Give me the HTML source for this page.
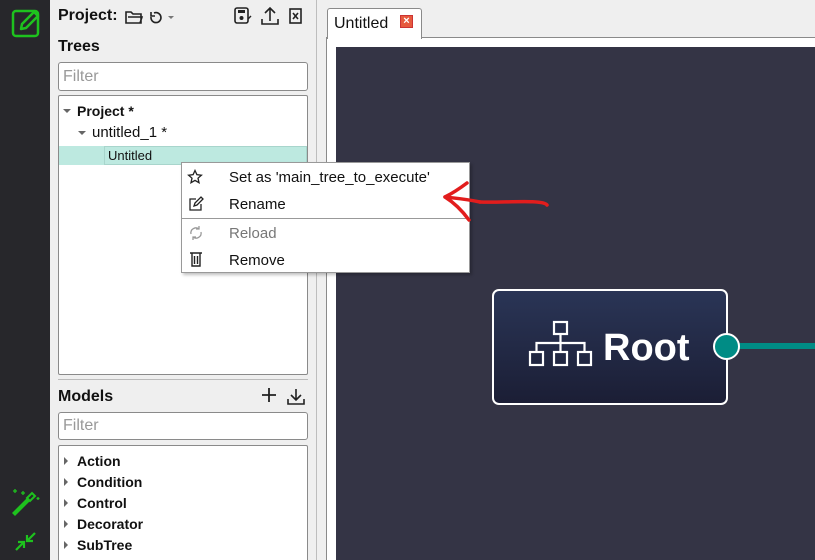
<!DOCTYPE html><html><head><style>
*{box-sizing:border-box;margin:0;padding:0}
html,body{width:815px;height:560px;overflow:hidden}
body{background:#efefef;font-family:"Liberation Sans","DejaVu Sans",sans-serif;position:relative;color:#111}
.a{position:absolute}
.inp{position:absolute;background:#fff;border:1px solid #8a8a8a;border-radius:3px;color:#999;font-size:16px;padding-left:4px;line-height:24px}
.box{position:absolute;background:#fff;border:1px solid #8a8a8a;border-radius:2px}
.b{font-weight:bold;font-size:14px}
.tri{position:absolute;width:0;height:0}
.td{border-left:4px solid transparent;border-right:4px solid transparent;border-top:4px solid #666}
.tr{border-top:4px solid transparent;border-bottom:4px solid transparent;border-left:4px solid #666}
.mi{position:absolute;left:47px;font-size:15px}
</style></head><body>
<div class="a" style="left:0;top:0;width:50px;height:560px;background:#27272b"></div>
<svg class="a" style="left:11px;top:7px" width="32" height="32" viewBox="0 0 32 32"><rect x="2" y="4" width="25" height="25" rx="3" fill="none" stroke="#1ec21e" stroke-width="2.5"/><path d="M10 22l1-5 12-12 4 4-12 12z" fill="#27272b" stroke="#1ec21e" stroke-width="2.5" stroke-linejoin="round"/></svg>
<svg class="a" style="left:9px;top:485px" width="32" height="32"><path d="M3 28l15-15 3 3-15 15z" fill="#1ec21e"/><path d="M18 13l5-5 3 3-5 5z" fill="none" stroke="#1ec21e" stroke-width="2"/><path d="M6 4v4M4 6h4M14 6v4M12 8h4M29 12v3M27.5 13.5h3" stroke="#1ec21e" stroke-width="1.3"/></svg>
<svg class="a" style="left:13px;top:530px" width="26" height="22"><path d="M3 20l8-8M5 12h6v6M22 3l-8 8M14 5v6h6" fill="none" stroke="#1ec21e" stroke-width="2.2"/></svg>
<div class="a b" style="left:58px;top:7px;font-size:16px">Project:</div>
<svg class="a" style="left:124px;top:8px" width="60" height="18"><path d="M2 4h5l2 2h8v9H2z M4 9h14l-2 6" fill="none" stroke="#222" stroke-width="1.6"/><path d="M30 5a5 5 0 1 1-3 4M27 4v4h4" fill="none" stroke="#222" stroke-width="1.6"/><path d="M44 8l3 3 3-3z" fill="#777"/></svg>
<svg class="a" style="left:233px;top:6px" width="75" height="20"><rect x="2" y="2" width="13" height="15" rx="2" fill="none" stroke="#222" stroke-width="1.6"/><rect x="5" y="4" width="7" height="3" fill="#222"/><circle cx="8.5" cy="12" r="2" fill="#222"/><path d="M15 13l3-3" stroke="#222" stroke-width="1.4"/><path d="M37 15v-13M32 7l5-5 5 5M29 13v5h16v-5" fill="none" stroke="#222" stroke-width="1.6"/><rect x="57" y="3" width="11" height="14" fill="none" stroke="#222" stroke-width="1.6"/><path d="M60 7l5 6M65 7l-5 6" stroke="#222" stroke-width="1.6"/></svg>
<div class="a b" style="left:58px;top:38px;font-size:16px">Trees</div>
<div class="inp" style="left:58px;top:62px;width:250px;height:29px;line-height:27px">Filter</div>
<div class="box" style="left:58px;top:95px;width:250px;height:280px"></div>
<div class="tri td" style="left:63px;top:109px"></div>
<div class="a b" style="left:77px;top:103px">Project *</div>
<div class="tri td" style="left:78px;top:131px"></div>
<div class="a" style="left:92px;top:124px;font-size:15px">untitled_1 *</div>
<div class="a" style="left:59px;top:146px;width:248px;height:19px;background:#bde9e0"></div>
<div class="a" style="left:104px;top:146px;width:203px;height:19px;border:1px solid #a8d5cc;font-size:13px;padding-left:3px;line-height:17px">Untitled</div>
<div class="a" style="left:58px;top:379px;width:250px;height:1px;background:#bbb"></div>
<div class="a b" style="left:58px;top:388px;font-size:16px">Models</div>
<svg class="a" style="left:260px;top:386px" width="50" height="22"><path d="M9 2v14M2 9h14" stroke="#222" stroke-width="1.8"/><path d="M36 3v11M31 9l5 5 5-5M28 13v5h16v-5" fill="none" stroke="#222" stroke-width="1.6"/></svg>
<div class="inp" style="left:58px;top:412px;width:250px;height:28px;line-height:26px">Filter</div>
<div class="box" style="left:58px;top:445px;width:250px;height:120px"></div>
<div class="tri tr" style="left:64px;top:457px"></div><div class="a b" style="left:77px;top:453px">Action</div>
<div class="tri tr" style="left:64px;top:478px"></div><div class="a b" style="left:77px;top:474px">Condition</div>
<div class="tri tr" style="left:64px;top:499px"></div><div class="a b" style="left:77px;top:495px">Control</div>
<div class="tri tr" style="left:64px;top:520px"></div><div class="a b" style="left:77px;top:516px">Decorator</div>
<div class="tri tr" style="left:64px;top:541px"></div><div class="a b" style="left:77px;top:537px">SubTree</div>
<div class="a" style="left:316px;top:0;width:1px;height:560px;background:#bdbdbd"></div>
<div class="a" style="left:326px;top:37px;width:489px;height:523px;background:#fff;border-left:1px solid #8a8a8a;border-top:1px solid #8a8a8a"></div>
<div class="a" style="left:327px;top:8px;width:95px;height:31px;background:#fff;border:1px solid #8a8a8a;border-bottom:none;border-radius:3px 3px 0 0"></div>
<div class="a" style="left:334px;top:15px;font-size:16px">Untitled</div>
<div class="a" style="left:400px;top:15px;width:13px;height:13px;background:#e65a3e;border:1px solid #c33;color:#fff;font-size:11px;line-height:11px;text-align:center;font-weight:bold">×</div>
<div class="a" style="left:336px;top:47px;width:479px;height:513px;background:#343445"></div>
<div class="a" style="left:727px;top:343px;width:88px;height:6px;background:#008c85"></div>
<div class="a" style="left:492px;top:289px;width:236px;height:116px;border:2px solid #fff;border-radius:7px;background:linear-gradient(#2a3556,#1b1e35)"></div>
<svg class="a" style="left:528px;top:320px" width="66" height="48"><g fill="none" stroke="#fff" stroke-width="2.2"><rect x="26" y="2" width="13" height="12"/><rect x="2" y="32" width="13" height="13"/><rect x="26" y="32" width="13" height="13"/><rect x="50" y="32" width="13" height="13"/><path d="M32.5 14v18M8.5 32v-9h48v9"/></g></svg>
<div class="a" style="left:603px;top:325px;color:#fff;font-weight:bold;font-size:38px;line-height:46px">Root</div>
<div class="a" style="left:713px;top:333px;width:27px;height:27px;border-radius:50%;background:#008c85;border:2px solid #fff"></div>
<div class="a" style="left:181px;top:162px;width:289px;height:111px;background:#fff;border:1px solid #999;box-shadow:2px 2px 3px rgba(0,0,0,.25)">
<svg class="a" style="left:5px;top:6px" width="16" height="16"><path d="M8 1.5l1.9 4.2 4.5.5-3.4 3 1 4.5L8 11.4 4 13.7l1-4.5-3.4-3 4.5-.5z" fill="none" stroke="#222" stroke-width="1.3"/></svg>
<div class="mi" style="top:6px">Set as 'main_tree_to_execute'</div>
<svg class="a" style="left:6px;top:33px" width="16" height="16"><path d="M8 3H2v11h11V8M6 10l1-3 6-6 2 2-6 6z" fill="none" stroke="#222" stroke-width="1.3"/></svg>
<div class="mi" style="top:33px">Rename</div>
<div class="a" style="left:0;top:55px;width:287px;height:1px;background:#999"></div>
<svg class="a" style="left:6px;top:62px" width="16" height="16"><path d="M3 9a5 5 0 0 1 8-5M13 7a5 5 0 0 1-8 5M11 1v3h-3M5 15v-3h3" fill="none" stroke="#999" stroke-width="1.3"/></svg>
<div class="mi" style="top:62px;color:#777">Reload</div>
<svg class="a" style="left:6px;top:88px" width="16" height="16"><path d="M2 2h12M4 2v13h8V2M6.5 5v8M9.5 5v8" fill="none" stroke="#222" stroke-width="1.4"/></svg>
<div class="mi" style="top:89px">Remove</div>
</div>
<svg class="a" style="left:435px;top:175px" width="120" height="55"><path d="M112 30c-4-6-45-2-67-3" fill="none" stroke="#e21d1d" stroke-width="3.5" stroke-linecap="round"/><path d="M32 8C24 14 16 19 10 22c8 5 16 12 24 23" fill="none" stroke="#e21d1d" stroke-width="3.5" stroke-linecap="round" stroke-linejoin="round"/><path d="M45 27c-14-3-27-4-35-5" fill="none" stroke="#e21d1d" stroke-width="3.5" stroke-linecap="round"/></svg>
</body></html>
